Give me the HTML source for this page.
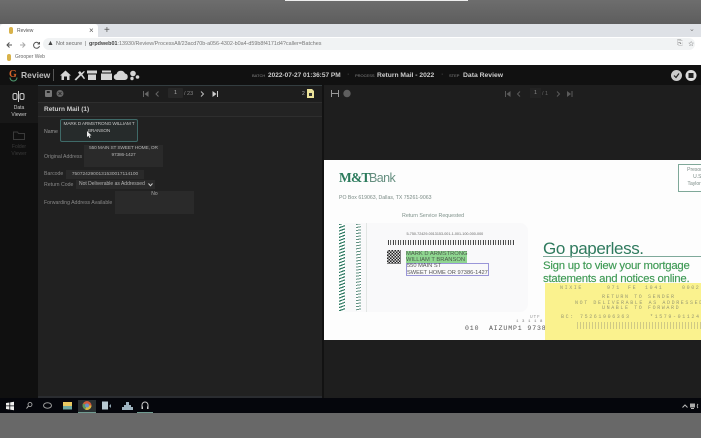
<!DOCTYPE html>
<html><head><meta charset="utf-8"><title>Review</title>
<style>
html,body{margin:0;padding:0;width:701px;height:438px;overflow:hidden;background:#666;font-family:"Liberation Sans",sans-serif}
.a{position:absolute;white-space:nowrap}
#w{position:absolute;left:0;top:0;width:701px;height:438px;overflow:hidden;filter:blur(.35px)}
svg{position:absolute;overflow:visible}
.m{font-family:"Liberation Mono",monospace;font-size:5px;letter-spacing:1.6px;color:#9a9a72;line-height:6px}
</style></head><body><div id="w">
<div class="a" style="left:0;top:0;width:701px;height:24px;background:linear-gradient(#6d6d6d,#5d5d5d)"></div>
<div class="a" style="left:285px;top:0;width:183px;height:1px;background:#eee"></div>
<div class="a" style="left:0;top:24px;width:701px;height:13px;background:#dee1e6"></div>
<div class="a" style="left:0;top:24px;width:98px;height:13px;background:#fff;border-radius:3px 3px 0 0"></div>
<div class="a" style="left:0;top:37px;width:701px;height:28px;background:#fff"></div>
<div class="a" style="left:43px;top:38px;width:652px;height:12px;background:#f1f3f4;border-radius:6px"></div>
<div class="a" style="left:9px;top:27px;width:4px;height:7px;background:#d8b24a;border-radius:2px"></div>
<div class="a" style="left:17px;top:27.5px;font-size:5px;color:#555">Review</div>
<div class="a" style="left:89px;top:26px;font-size:8px;color:#555">×</div>
<div class="a" style="left:104px;top:25px;font-size:10px;color:#555">+</div>
<div class="a" style="left:689px;top:25px;font-size:7px;color:#777">⌄</div>
<svg style="left:6px;top:41px" width="34" height="8" fill="none" stroke="#555"><path d="M6 4H1M3.500 1.500L1 4 3.500 6.500"/><path d="M14 4H19M16.500 1.500L19 4 16.500 6.500" stroke="#aaa"/><path d="M33 2.500A3 3 0 1 0 33.500 5M33.500 1V3H31.500"/></svg>
<div class="a" style="left:47px;top:40px;font-size:7px;color:#444">▲</div>
<div class="a" style="left:56px;top:41px;font-size:5.400px;color:#666">Not secure</div>
<div class="a" style="left:85px;top:41px;font-size:5.500px;color:#666">|</div>
<div class="a" style="left:89px;top:41px;font-size:5.400px;color:#777"><b style="color:#444">grpdweb01</b>:13930/Review/ProcessAll/23acd70b-a056-4302-b0a4-d59b8f4171d4?caller=Batches</div>
<div class="a" style="left:677px;top:40px;font-size:7px;color:#888">⎘</div>
<div class="a" style="left:688px;top:40px;font-size:7px;color:#444">☆</div>
<div class="a" style="left:7px;top:54px;width:4px;height:7px;background:#d8b24a;border-radius:2px"></div>
<div class="a" style="left:15px;top:54px;font-size:5px;color:#666">Grooper Web</div>

<div class="a" style="left:0;top:65px;width:701px;height:20px;background:#111"></div>
<div class="a" style="left:0;top:85px;width:38px;height:313px;background:#101010"></div>
<div class="a" style="left:0;top:85px;width:38px;height:38px;background:#181818"></div>
<div class="a" style="left:38px;top:85px;width:284px;height:313px;background:#212121"></div>
<div class="a" style="left:38px;top:85px;width:284px;height:17px;background:#1d1d1d"></div>
<div class="a" style="left:38px;top:102px;width:284px;height:15px;background:#232323;border-top:1px solid #2e2e2e;border-bottom:1px solid #2e2e2e;box-sizing:border-box"></div>
<div class="a" style="left:322px;top:85px;width:2px;height:313px;background:#121212"></div>
<div class="a" style="left:324px;top:85px;width:377px;height:313px;background:#1e1e1e"></div>
<div class="a" style="left:38px;top:85px;width:284px;height:1px;background:#333d40"></div>

<div class="a" style="left:9px;top:69px;font:bold 10px 'Liberation Serif',serif;color:#d8642a">G</div>
<svg style="left:9px;top:77px" width="9" height="4" fill="none" stroke="#4f9a70"><path d="M1 .5A3.500 3.500 0 0 0 8 .5"/></svg>
<div class="a" style="left:21px;top:70px;font-size:8.500px;font-weight:bold;color:#bbb">Review</div>
<div class="a" style="left:53px;top:69px;width:1px;height:12px;background:#555"></div>
<svg style="left:60px;top:70px" width="80" height="11" fill="#d5d5d5">
<path d="M0 5.500L5.500 .5 11 5.500H9.500V10H7V6.500H4V10H1.500V5.500z"/>
<path d="M14.500 9.500l5-5-1.500-2 2-1.500 1.500 2 2.500-2 .8.800-2.500 2.700 2.700 3.700-1 1-3-3.700-5 5z"/>
<path d="M27 .5h10v3H27zM28 4.500h8V10h-8z"/>
<path d="M42 .5h9v2h-9zM41 3.500h11V10H41z"/>
<path d="M57 10a3 3 0 0 1-.5-6 4.500 4.500 0 0 1 8.500-.5 3.300 3.300 0 0 1 0 6.500z"/>
<circle cx="73" cy="3.500" r="2.800"/><circle cx="77.500" cy="7" r="1.800"/><circle cx="72" cy="8.500" r="1.700"/>
</svg>
<div class="a" style="left:252px;top:73px;font-size:4px;color:#888">BATCH</div>
<div class="a" style="left:268px;top:71.500px;font-size:6.500px;font-weight:bold;color:#ccc">2022-07-27 01:36:57 PM</div>
<div class="a" style="left:347px;top:71px;font-size:7px;color:#777">·</div>
<div class="a" style="left:355px;top:73px;font-size:4px;color:#888">PROCESS</div>
<div class="a" style="left:377px;top:71.500px;font-size:6.700px;font-weight:bold;color:#ccc">Return Mail - 2022</div>
<div class="a" style="left:441px;top:71px;font-size:7px;color:#777">·</div>
<div class="a" style="left:449px;top:73px;font-size:4px;color:#888">STEP</div>
<div class="a" style="left:463px;top:71.500px;font-size:6.800px;font-weight:bold;color:#ccc">Data Review</div>
<svg style="left:671px;top:70px" width="26" height="11"><circle cx="5.500" cy="5.500" r="5.500" fill="#ccc"/><path d="M3 5.500L5 7.500 8 3.500" stroke="#222" stroke-width="1.200" fill="none"/><circle cx="20" cy="5.500" r="5.500" fill="#ddd"/><rect x="17.500" y="3" width="5" height="5" fill="#222"/></svg>

<svg style="left:12px;top:91px" width="13" height="11" fill="none" stroke="#ccc"><rect x="1" y="2.500" width="4" height="6" rx="1.500"/><rect x="8" y="2.500" width="4" height="6" rx="1.500"/><path d="M6.500 0V11"/></svg>
<div class="a" style="left:0;top:105px;width:38px;text-align:center;font-size:5px;line-height:7px;color:#ccc;white-space:normal">Data<br>Viewer</div>
<svg style="left:13px;top:130px" width="12" height="10" fill="none" stroke="#3a3a3a"><path d="M.5 2h4l1 1.500h6V9.500H.5z"/></svg>
<div class="a" style="left:0;top:144px;width:38px;text-align:center;font-size:5px;line-height:7px;color:#3a3a3a">Folder<br>Viewer</div>

<svg style="left:45px;top:90px" width="20" height="8"><rect width="7" height="7" rx="1" fill="#777"/><rect x="1.800" y="1" width="3" height="2" fill="#222"/><circle cx="15" cy="3.500" r="3.500" fill="#666"/><path d="M13.500 2l3 3m0-3l-3 3" stroke="#222" stroke-width=".8"/></svg>
<svg style="left:143px;top:91px" width="75" height="6">
<path d="M.5 0V6" stroke="#666"/><path d="M5.500 0V6L1.500 3z" fill="#666"/>
<path d="M15.500 .5L13 3 15.500 5.500" fill="none" stroke="#666"/>
<path d="M58 .5L60.500 3 58 5.500" fill="none" stroke="#bbb"/>
<path d="M69.500 0V6L73.500 3z" fill="#ccc"/><path d="M74.500 0V6" stroke="#ccc"/>
</svg>
<div class="a" style="left:168px;top:88px;width:15px;height:10px;background:#272727;border-radius:1px;font-size:5.500px;color:#aaa;text-align:center;line-height:10px">1</div>
<div class="a" style="left:184px;top:91px;font-size:5.500px;color:#888">/ 23</div>
<div class="a" style="left:302px;top:91px;font-size:5px;color:#bbb">2</div>
<svg style="left:307px;top:89px" width="7" height="9"><path d="M0 0H5L7 2V9H0z" fill="#ece39a"/><rect x="2" y="4" width="3" height="3" fill="#333"/></svg>

<div class="a" style="left:44px;top:106px;font-size:6.500px;font-weight:bold;color:#ccc">Return Mail (1)</div>

<div class="a" style="left:44px;top:128.500px;font-size:5.200px;color:#999">Name</div>
<div class="a" style="left:60px;top:119px;width:78px;height:23px;box-sizing:border-box;background:#262b2b;border:1px solid #3f6a68;border-radius:2px;font-size:4.800px;letter-spacing:-.2px;line-height:7px;color:#c4c4c4;text-align:center;padding-top:1px">MARK D ARMSTRONG WILLIAM T<br>BRANSON</div>
<svg style="left:87px;top:131px" width="5" height="7"><path d="M0 0V6L1.500 4.800 2.500 7 3.500 6.500 2.500 4.500H4.500z" fill="#eee"/></svg>
<div class="a" style="left:44px;top:153.500px;font-size:5.200px;color:#888">Original Address</div>
<div class="a" style="left:84px;top:145px;width:79px;height:22px;background:#2a2a2a;font-size:4.800px;letter-spacing:-.15px;line-height:7px;color:#b4b4b4;text-align:center;box-sizing:border-box">550 MAIN ST SWEET HOME, OR<br>97386-1427</div>
<div class="a" style="left:44px;top:171px;font-size:5.200px;color:#888">Barcode</div>
<div class="a" style="left:66px;top:170px;width:78px;height:9px;background:#2a2a2a;font-size:4.800px;line-height:9px;color:#b4b4b4;text-align:center">75072429001315300171141​00</div>
<div class="a" style="left:44px;top:181.500px;font-size:5.200px;color:#888">Return Code</div>
<div class="a" style="left:76px;top:180px;width:79px;height:9px;background:#2a2a2a;font-size:5px;line-height:9px;color:#b4b4b4;padding-left:3px;box-sizing:border-box">Not Deliverable as Addressed</div>
<svg style="left:148px;top:183px" width="5" height="4" fill="none" stroke="#ccc"><path d="M.5 .5L2.500 2.800 4.500 .5"/></svg>
<div class="a" style="left:44px;top:199.500px;font-size:5.200px;color:#888">Forwarding Address Available</div>
<div class="a" style="left:115px;top:191px;width:79px;height:23px;background:#2a2a2a;font-size:5px;line-height:7px;color:#aaa;text-align:center;box-sizing:border-box">No</div>

<svg style="left:331px;top:90px" width="22" height="8"><path d="M.5 0V7M7.500 0V7M1 3.500H7" stroke="#999"/><circle cx="16" cy="3.500" r="3.700" fill="#5e5e5e"/></svg>
<svg style="left:505px;top:91px" width="70" height="6">
<path d="M.5 0V6" stroke="#5a5a5a"/><path d="M5.500 0V6L1.500 3z" fill="#5a5a5a"/>
<path d="M15 .5L12.500 3 15 5.500" fill="none" stroke="#5a5a5a"/>
<path d="M52 .5L54.500 3 52 5.500" fill="none" stroke="#5a5a5a"/>
<path d="M62 0V6L66 3z" fill="#5a5a5a"/><path d="M67 0V6" stroke="#5a5a5a"/>
</svg>
<div class="a" style="left:530px;top:88px;width:11px;height:10px;background:#232323;font-size:5.500px;color:#888;text-align:center;line-height:10px">1</div>
<div class="a" style="left:542px;top:91px;font-size:5.500px;color:#666">/ 1</div>

<!-- document -->
<div class="a" style="left:324px;top:160px;width:377px;height:180px;background:#fdfdfd;overflow:hidden">
 <div class="a" style="left:15px;top:10px;font:bold 13.500px 'Liberation Serif',serif;letter-spacing:-.8px;color:#2b7a5c">M&amp;T</div>
 <div class="a" style="left:45px;top:11px;font:12.500px 'Liberation Sans',sans-serif;color:#668f80;letter-spacing:-.6px">Bank</div>
 <div class="a" style="left:15px;top:35px;font-size:5.200px;color:#7a8a85">PO Box 619063, Dallas, TX 75261-9063</div>
 <div class="a" style="left:78px;top:53px;font-size:5.300px;color:#7d9089">Return Service Requested</div>
 <div class="a" style="left:15px;top:63px;width:189px;height:89px;background:#f9f9fa;border-radius:8px"></div>
 <div class="a" style="left:15px;top:64px;width:6px;height:87px;background:repeating-linear-gradient(160deg,#2f7a63 0 1.200px,#fff 1.200px 3px)"></div>
 <div class="a" style="left:32px;top:64px;width:5px;height:87px;background:repeating-linear-gradient(170deg,#5f8f80 0 1px,#fff 1px 3px)"></div>
 <div class="a" style="left:42px;top:63px;width:1px;height:89px;background:#e2e6e4"></div>
 <div class="a" style="left:82.500px;top:72px;font-size:3.700px;color:#666">5-750-72429-0013153-001-1-001-100-000-000</div>
 <div class="a" style="left:64px;top:80px;width:127px;height:5px;background:repeating-linear-gradient(90deg,#444 0 1px,#fff 1px 2px,#666 2px 3px,#eee 3px 5px)"></div>
 <div class="a" style="left:63px;top:90px;width:14px;height:14px;background:repeating-conic-gradient(#222 0 25%,#ddd 0 50%) 0 0/3px 3px"></div>
 <div class="a" style="left:82px;top:91px;width:61px;height:6px;background:#8fd690;font-size:5.800px;line-height:6px;color:#4a5a4a">MARK D ARMSTRONG</div>
 <div class="a" style="left:82px;top:97px;width:61px;height:6.500px;background:#8fd690;font-size:5.800px;line-height:6.500px;color:#4a5a4a">WILLIAM T BRANSON</div>
 <div class="a" style="left:82px;top:103px;width:83px;height:13px;box-sizing:border-box;border:1px solid #9a96d8"></div>
 <div class="a" style="left:83px;top:103px;font-size:5.700px;line-height:6.500px;color:#555">550 MAIN ST<br>SWEET HOME OR 97386-1427</div>
 <div class="a" style="left:141px;top:165px;font:6.500px 'Liberation Mono',monospace;letter-spacing:.9px;color:#555">010&nbsp; AIZUMP1 9738</div>
 <div class="a" style="left:192px;top:160px;font:4px 'Liberation Mono',monospace;letter-spacing:.6px;color:#777">1 3 1 1 8</div>
 <div class="a" style="left:206px;top:155px;font:4.500px 'Liberation Mono',monospace;letter-spacing:.8px;color:#999">UTF</div>
 <div class="a" style="left:219px;top:79px;font-size:17px;letter-spacing:-.4px;color:#2f7a5e">Go paperless.</div>
 <div class="a" style="left:219px;top:96px;width:158px;height:1px;background:#7ea99a"></div>
 <div class="a" style="left:219px;top:100px;font-size:11.400px;line-height:12.500px;letter-spacing:-.25px;-webkit-text-stroke:.15px #3f9a55;color:#3f9a55">Sign up to view your mortgage<br>statements and notices online.</div>
 <div class="a" style="left:221px;top:123px;width:156px;height:57px;background:#faf28e"></div>
 <div class="a m" style="left:236px;top:124.500px">NIXIE</div>
 <div class="a m" style="left:283px;top:124.500px">971</div>
 <div class="a m" style="left:304px;top:124.500px">FE</div>
 <div class="a m" style="left:321px;top:124.500px">1041</div>
 <div class="a m" style="left:358px;top:124.500px">0002</div>
 <div class="a m" style="left:278px;top:134px">RETURN TO SENDER</div>
 <div class="a m" style="left:251px;top:139.500px">NOT DELIVERABLE AS ADDRESSED</div>
 <div class="a m" style="left:278px;top:145px">UNABLE TO FORWARD</div>
 <div class="a m" style="left:237px;top:154px">BC:</div>
 <div class="a m" style="left:256px;top:154px">75261906363</div>
 <div class="a m" style="left:326px;top:154px">*1579-01124</div>
 <div class="a" style="left:253px;top:162px;width:124px;height:7px;background:repeating-linear-gradient(90deg,#cfc985 0 1px,transparent 1px 3px)"></div>
 <div class="a" style="left:354px;top:4px;width:40px;height:28px;box-sizing:border-box;border:1px solid #7fa899;background:#fff;font-size:5px;line-height:7px;color:#7a8a85;text-align:center;padding-top:2px">Presorted<br>U.S.<br>Taylor Co</div>
</div>

<!-- taskbar -->
<div class="a" style="left:0;top:398px;width:701px;height:15px;background:#05060c"></div>
<div class="a" style="left:38px;top:396px;width:284px;height:2px;background:#2a2c30"></div>
<div class="a" style="left:0;top:413px;width:701px;height:25px;background:#686868"></div>
<svg style="left:6px;top:401px" width="150" height="12">
<path d="M0 2L3.400 1.500V4.500H0zM4.200 1.400L8 .8V4.500H4.200zM0 5.300H3.400V8.500L0 8zM4.200 5.300H8V9.200L4.200 8.600z" fill="#eee"/>
<circle cx="24" cy="3.500" r="2" fill="none" stroke="#bbb" stroke-width=".8"/><path d="M22.500 5L20.500 7.500" stroke="#bbb"/>
<ellipse cx="41.500" cy="4.500" rx="4" ry="2.700" fill="none" stroke="#999"/>
<path d="M57 1H66V8.500H57z" fill="#e8c860"/><path d="M57 5H66V8.500H57z" fill="#6fa8a0"/>
<rect x="72" y="-1" width="18" height="13" fill="#2a3032"/>
<circle cx="81" cy="4.500" r="4.500" fill="#d05a3a"/><path d="M81 4.500H85.500A4.500 4.500 0 0 1 79 8.500z" fill="#d8b840"/><path d="M81 4.500L79 8.500A4.500 4.500 0 0 1 77 2.500z" fill="#5a9a5a"/><circle cx="81" cy="4.500" r="2" fill="#6a90c8"/>
<rect x="96" y="0.500" width="6" height="8" fill="#b8c8d0"/><path d="M103 5L105 3V7z" fill="#8fa4b0"/>
<path d="M120 1H123V4H125V6H127V9H116V6H118V4H120z" fill="#9fb4c0"/>
<path d="M136 7V4A3 3 0 0 1 142 4V7" fill="none" stroke="#ccc"/><rect x="135.500" y="5.500" width="1.500" height="2.500" fill="#ccc"/><rect x="141" y="5.500" width="1.500" height="2.500" fill="#ccc"/>
</svg>
<div class="a" style="left:78px;top:411.500px;width:18px;height:1.500px;background:#6f9a90"></div>
<div class="a" style="left:137px;top:411.500px;width:16px;height:1.500px;background:#6f9a90"></div>
<svg style="left:681px;top:403px" width="20" height="7" fill="none" stroke="#bbb"><path d="M1.500 4.500L4 2 6.500 4.500"/><rect x="9" y=".5" width="5" height="4" fill="#aaa" stroke="none"/><path d="M10 5.500H13M17 1a3 3 0 0 0 0 4"/></svg>
</div></body></html>
